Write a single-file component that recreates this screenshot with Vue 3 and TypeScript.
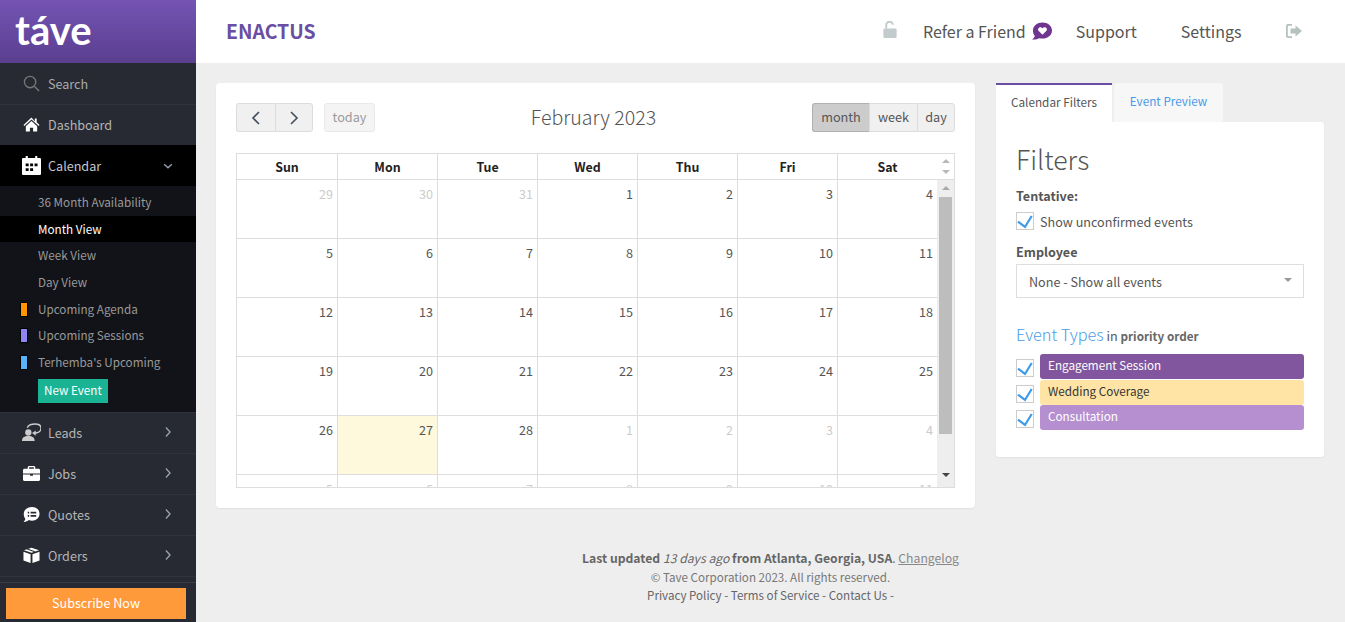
<script setup lang="ts">
const weeks: { n: number; dim?: boolean; today?: boolean }[][] = [
  [{ n: 29, dim: true }, { n: 30, dim: true }, { n: 31, dim: true }, { n: 1 }, { n: 2 }, { n: 3 }, { n: 4 }],
  [{ n: 5 }, { n: 6 }, { n: 7 }, { n: 8 }, { n: 9 }, { n: 10 }, { n: 11 }],
  [{ n: 12 }, { n: 13 }, { n: 14 }, { n: 15 }, { n: 16 }, { n: 17 }, { n: 18 }],
  [{ n: 19 }, { n: 20 }, { n: 21 }, { n: 22 }, { n: 23 }, { n: 24 }, { n: 25 }],
  [{ n: 26 }, { n: 27, today: true }, { n: 28 }, { n: 1, dim: true }, { n: 2, dim: true }, { n: 3, dim: true }, { n: 4, dim: true }],
  [{ n: 5, dim: true }, { n: 6, dim: true }, { n: 7, dim: true }, { n: 8, dim: true }, { n: 9, dim: true }, { n: 10, dim: true }, { n: 11, dim: true }],
]
const days = ['Sun', 'Mon', 'Tue', 'Wed', 'Thu', 'Fri', 'Sat']
const subs = [
  { t: '36 Month Availability' },
  { t: 'Month View', active: true },
  { t: 'Week View' },
  { t: 'Day View' },
  { t: 'Upcoming Agenda', c: '#ff9800' },
  { t: 'Upcoming Sessions', c: '#9184f5' },
  { t: "Terhemba's Upcoming", c: '#55b4fb' },
]
const types = [
  { t: 'Engagement Session', cls: 'ev-a' },
  { t: 'Wedding Coverage', cls: 'ev-b' },
  { t: 'Consultation', cls: 'ev-c' },
]
</script>

<template>
  <div class="app">
    <aside class="side">
      <div class="logo">táve</div>
      <div class="row search">
        <svg class="ic sm" viewBox="0 0 18 18"><circle cx="7.5" cy="7.5" r="6" fill="none" stroke="#777" stroke-width="1.4"/><path d="M12 12l5 5" stroke="#777" stroke-width="1.5"/></svg>
        <span>Search</span>
      </div>
      <div class="row dash">
        <svg class="ic sm" viewBox="0 0 18 18"><path fill="#fff" d="M9 1.500 .5 9.500l.9 1L9 3.600l7.600 6.900.9-1-3-2.800V2.600h-2v3.100zM3 10.800V16.500h4.300v-4h3.400v4H15v-5.700L9 5.200z"/></svg>
        <span>Dashboard</span>
      </div>
      <div class="row open">
        <svg class="ic" viewBox="0 0 18 18"><path fill="#fff" fill-rule="evenodd" d="M3.500 0h2v2h7V0h2v2H17a1 1 0 0 1 1 1v14a1 1 0 0 1-1 1H1a1 1 0 0 1-1-1V3a1 1 0 0 1 1-1h2.500zM3.500 7v2.800h2.800V7zm4.200 0v2.800h2.800V7zm4.200 0v2.800h2.800V7zM3.500 11.500v2.800h2.800v-2.800zm4.200 0v2.800h2.800v-2.800z"/></svg>
        <span class="grow">Calendar</span>
        <svg class="chev" viewBox="0 0 10 10"><path d="M1.800 3.500 5 6.500l3.200-3" fill="none" stroke="#9aa3ae" stroke-width="1.100"/></svg>
      </div>
      <div class="subs">
        <div v-for="s in subs" :key="s.t" class="sub" :class="{ on: s.active }">
          <i v-if="s.c" class="flag" :style="{ background: s.c }"></i>
          {{ s.t }}
        </div>
        <div class="new-ev">New Event</div>
      </div>
      <div class="row item">
        <svg class="ic" viewBox="0 0 18 18"><circle cx="6" cy="9" r="3" fill="#ccc"/><path fill="#ccc" d="M0 17c0-3.500 2-4.800 6-4.800s6 1.300 6 4.800z"/><path d="M5 4.500C6 2 9 1 12.500 1S18 2.500 18 5s-2.500 4.500-6 4.500" fill="none" stroke="#ccc" stroke-width="1.300"/><path fill="#ccc" d="M13 7v5l-3.500-2.500z"/></svg>
        <span class="grow">Leads</span>
        <svg class="chev" viewBox="0 0 10 10"><path d="M3.300 1.200 6.700 5 3.300 8.800" fill="none" stroke="#9aa3ae" stroke-width="1.100"/></svg>
      </div>
      <div class="row item">
        <svg class="ic sm" viewBox="0 0 18 18"><path fill="#fff" d="M6 1h6l1 1v2h4l1 1v4H0V5l1-1h4V2zm.500 1.500V4h5V2.500zM0 10h7.500v1.500h3V10H18v6l-1 1H1l-1-1z"/></svg>
        <span class="grow">Jobs</span>
        <svg class="chev" viewBox="0 0 10 10"><path d="M3.300 1.200 6.700 5 3.300 8.800" fill="none" stroke="#9aa3ae" stroke-width="1.100"/></svg>
      </div>
      <div class="row item">
        <svg class="ic sm" viewBox="0 0 18 18"><path fill="#fff" fill-rule="evenodd" d="M9.500 1C14 1 17.500 4 17.500 8.200S14 15.500 9.500 15.500c-1.200 0-2.300-.2-3.200-.6C4.800 16.200 2.500 17 .5 16.800c1-.8 1.800-2 2-3.300C1.300 12.200.8 10.300.8 8.200.8 4 5 1 9.500 1zM5 6v2h1.500V6zm3 0v2h6V6zM5 9.500v2h1.500v-2zm3 0v2h6v-2z"/></svg>
        <span class="grow">Quotes</span>
        <svg class="chev" viewBox="0 0 10 10"><path d="M3.300 1.200 6.700 5 3.300 8.800" fill="none" stroke="#9aa3ae" stroke-width="1.100"/></svg>
      </div>
      <div class="row item">
        <svg class="ic sm" viewBox="0 0 18 18"><path fill="#fff" d="M9 .8 17 3.500 9 6.200 1 3.500z"/><path fill="#fff" d="M.5 5 8 7.600V17L.5 14.200zM17.500 5 10 7.600V17l7.500-2.800z"/><path d="M4.500 2.200 12.500 5" stroke="#272a33" stroke-width="1.200"/></svg>
        <span class="grow">Orders</span>
        <svg class="chev" viewBox="0 0 10 10"><path d="M3.300 1.200 6.700 5 3.300 8.800" fill="none" stroke="#9aa3ae" stroke-width="1.100"/></svg>
      </div>
      <div class="sep"></div>
      <div class="sub-wrap"><div class="subscribe">Subscribe Now</div></div>
    </aside>

    <div class="main">
      <header class="top">
        <div class="brand">ENACTUS</div>
        <svg class="lock" viewBox="0 0 14 18"><path fill="#c3cccc" d="M1 8h12a1 1 0 0 1 1 1v8a1 1 0 0 1-1 1H1a1 1 0 0 1-1-1V9a1 1 0 0 1 1-1z"/><path d="M3 8V4.500a3.500 3.500 0 0 1 7-.5" fill="none" stroke="#c3cccc" stroke-width="2"/></svg>
        <span class="nav refer">Refer a Friend</span>
        <svg class="heart" viewBox="0 0 21 18"><path fill="#6f3590" d="M11 0c5.500 0 10 3.500 10 8.500S16.500 17 11 17c-1.300 0-2.500-.2-3.500-.5C5.500 17.800 3 18 0 17.800c1.300-.8 2.400-2 3-3.500C1.500 12.800 1 10.800 1 8.500 1 3.500 5.500 0 11 0z"/><path fill="#fff" d="M11 13 6.800 8.800C5 6.500 8.800 3.500 11 6.200c2.200-2.700 6-.300 4.200 2.600z"/></svg>
        <span class="nav support">Support</span>
        <span class="nav settings">Settings</span>
        <svg class="out" viewBox="0 0 16 14"><path fill="#b5c2bf" d="M2 0h4v1.800H2.500a.7.7 0 0 0-.7.7v9c0 .4.300.7.700.7H6V14H2a2 2 0 0 1-2-2V2a2 2 0 0 1 2-2z"/><path fill="#b5c2bf" d="M9.500 1.500 16 7l-6.500 5.500V9.500H4.500v-5h5z"/></svg>
      </header>

      <div class="content">
        <section class="card">
          <div class="toolbar">
            <div class="left">
              <div class="group">
                <button class="btn arrow"><svg viewBox="0 0 10 14"><path d="M8 1 2 7l6 6" fill="none" stroke="#444f5e" stroke-width="1.600"/></svg></button>
                <button class="btn arrow"><svg viewBox="0 0 10 14"><path d="M2 1l6 6-6 6" fill="none" stroke="#444f5e" stroke-width="1.600"/></svg></button>
              </div>
              <button class="btn today">today</button>
            </div>
            <h2 class="title">February 2023</h2>
            <div class="group views">
              <button class="btn vw active">month</button>
              <button class="btn vw">week</button>
              <button class="btn vw">day</button>
            </div>
          </div>

          <div class="cal">
            <div class="head">
              <div v-for="d in days" :key="d" class="hd">{{ d }}</div>
              <div class="head-sb">
                <i class="tri up"></i>
                <i class="tri down"></i>
              </div>
            </div>
            <div class="body">
              <div class="grid">
                <div v-for="(w, i) in weeks" :key="i" class="week">
                  <div v-for="(c, j) in w" :key="j" class="cell" :class="{ dim: c.dim, now: c.today }">{{ c.n }}</div>
                </div>
              </div>
              <div class="sb">
                <i class="tri up dark"></i>
                <div class="thumb"></div>
                <i class="tri down black"></i>
              </div>
            </div>
          </div>
        </section>

        <aside class="filters">
          <div class="tabs">
            <div class="tab on">Calendar Filters</div>
            <div class="tab">Event Preview</div>
          </div>
          <div class="panel">
            <h3 class="ft">Filters</h3>
            <div class="lbl l1">Tentative:</div>
            <div class="chk-row">
              <span class="chk"><svg viewBox="0 0 16 16"><path d="M1 8.700 8 14 14.700 3" fill="none" stroke="#3d9be9" stroke-width="2.200"/></svg></span>
              <span>Show unconfirmed events</span>
            </div>
            <div class="lbl l2">Employee</div>
            <div class="select">
              <span>None - Show all events</span>
              <i class="caret"></i>
            </div>
            <div class="types"><span class="big">Event Types</span> <span class="in">in</span> <b>priority order</b></div>
            <div class="ev-list">
              <div v-for="e in types" :key="e.t" class="ev-row">
                <span class="chk"><svg viewBox="0 0 16 16"><path d="M1 8.700 8 14 14.700 3" fill="none" stroke="#3d9be9" stroke-width="2.200"/></svg></span>
                <div class="ev" :class="e.cls">{{ e.t }}</div>
              </div>
            </div>
          </div>
        </aside>
      </div>

      <footer class="foot">
        <div class="f1"><b>Last updated <em>13 days ago</em> from Atlanta, Georgia, USA</b>. <u>Changelog</u></div>
        <div class="f2">© Tave Corporation 2023. All rights reserved.</div>
        <div class="f3"><span>Privacy Policy</span> - <span>Terms of Service</span> - <span>Contact Us</span> -</div>
      </footer>
    </div>
  </div>
</template>

<style>
html, body { margin: 0; background: #eee; overflow: hidden; }
</style>

<style scoped>
.app {
  display: flex; width: 1345px; height: 622px; overflow: hidden; background: #eeeeee;
  font-family: "Noto Sans CJK SC", "Noto Sans", sans-serif; color: #555;
}
.side { width: 196px; flex: none; background: #272a33; display: flex; flex-direction: column; }
.logo {
  height: 63px; box-sizing: border-box; padding-left: 15px; background: linear-gradient(#7453b4, #5a3f8f);
  color: #fff; font-family: Lato, sans-serif; font-weight: 700; font-size: 40px; line-height: 60px;
}
.row {
  height: 41px; box-sizing: border-box; display: flex; align-items: center; padding: 0 22px 0 22px;
  color: #b5b5b5; font-size: 12.600px; gap: 7px;
}
.row.search { color: #aaa; height: 42px; border-bottom: 1px solid #30333d; }
.row.dash { height: 40px; padding-bottom: 2px; }
.row.open { background: #000; color: #c5c8ce; }
.row.item { border-top: 1px solid #30333d; padding-bottom: 2px; }
.ic { width: 19px; height: 19px; flex: none; }
.ic.sm { width: 17px; height: 17px; margin: 0 1px; }
.grow { flex: 1; }
.chev { width: 12px; height: 12px; flex: none; }
.subs { height: 226px; background: #111318; box-sizing: border-box; padding-top: 3px; }
.sub {
  height: 26.700px; line-height: 26.700px; padding-left: 38px; font-size: 11.700px; color: #9a9a9a; position: relative;
}
.sub.on { background: #000; color: #fff; }
.flag { position: absolute; left: 21px; top: 7px; width: 6px; height: 13px; box-shadow: 0 0 0 1px #000; }
.new-ev {
  margin: 3px 0 0 38px; width: 70px; height: 24px; line-height: 22px; text-align: center; background: #1ab394;
  color: #fff; font-size: 11.700px;
}
.sep { height: 6px; flex: none; border-top: 1px solid #30333d; box-sizing: border-box; }
.sub-wrap { border-top: 1px solid #3a3d45; padding: 5px 10px 0 6px; }
.subscribe {
  height: 31px; line-height: 29px; text-align: center; background: #ff9a3a; color: #fff; font-size: 12.600px;
}
.main { flex: 1; display: flex; flex-direction: column; min-width: 0; }
.top { height: 63px; flex: none; box-sizing: border-box; padding: 0 0 2px 30px; background: #fff; display: flex; align-items: center; font-size: 16px; color: #555; }
.brand { font-weight: 700; font-size: 19.400px; color: #6a4ea3; width: 657px; }
.lock { width: 14px; height: 17px; margin-top: -2px; }
.nav { white-space: nowrap; }
.refer { margin-left: 26px; margin-top: 1px; }
.heart { width: 20px; height: 18px; margin-left: 6px; }
.support { margin-left: 24px; }
.settings { margin-left: 44px; }
.out { width: 16px; height: 14px; margin-left: 45px; }
.content { display: flex; align-items: flex-start; padding: 20px 21px 0 20px; gap: 21px; }
.card {
  width: 759px; height: 425px; box-sizing: border-box; background: #fff; border-radius: 4px; padding: 20px;
  box-shadow: 0 1px 2px rgba(0,0,0,.06);
}
.toolbar { height: 50px; display: flex; align-items: flex-start; justify-content: space-between; }
.left { display: flex; gap: 11px; }
.group { display: flex; }
.btn {
  font-family: inherit; height: 29px; border: 1px solid #dcdcdc; background: #f0f0f0; color: #555; margin: 0; padding: 0 0 2px;
  font-size: 12.700px; box-sizing: border-box; border-radius: 0;
}
.arrow { width: 38.500px; display: flex; align-items: center; justify-content: center; padding: 0; }
.arrow svg { width: 10px; height: 14px; }
.group .btn:first-child { border-radius: 3px 0 0 3px; border-right: 0; }
.group .btn:last-child { border-radius: 0 3px 3px 0; }
.today { width: 51px; background: #f4f4f4; color: #999; border-radius: 3px; border-color: #e8e8e8; }
.title { margin: 0; font-weight: 300; font-size: 19.600px; line-height: 27px; color: #555; }
.views { width: 143px; }
.vw:nth-child(1) { width: 57px; background: #cccccc; border-color: #b0b0b0; }
.vw:nth-child(2) { width: 48px; border-right: 0; }
.vw:nth-child(3) { width: 38px; }
.cal { width: 719px; height: 335px; box-sizing: border-box; border: 1px solid #ddd; overflow: hidden; }
.head { display: flex; height: 26px; box-sizing: border-box; border-bottom: 1px solid #ddd; }
.hd {
  width: 100px; box-sizing: border-box; text-align: center; border-right: 1px solid #ddd; font-size: 12.400px; font-weight: 700;
  color: #222; line-height: 27px;
}
.hd:first-child { width: 101px; }
.hd:nth-child(7) { width: 99px; border-right: 0; }
.head-sb { flex: 1; background: #fff; display: flex; flex-direction: column; align-items: center; justify-content: center; gap: 7px; }
.tri { width: 0; height: 0; display: block; border-left: 4px solid transparent; border-right: 4px solid transparent; }
.up { border-bottom: 4px solid #b8b8b8; }
.down { border-top: 4px solid #b8b8b8; }
.up.dark { border-bottom-color: #aaa; }
.down.black { border-top-color: #444; }
.body { display: flex; height: 308px; overflow: hidden; }
.grid { width: 700px; flex: none; }
.week { display: flex; height: 59px; border-bottom: 1px solid #ddd; box-sizing: border-box; }
.cell {
  width: 100px; box-sizing: border-box; border-right: 1px solid #ddd; padding: 6px 4px 0 0; text-align: right;
  font-size: 12.600px; line-height: 16px; color: #555;
}
.cell:first-child { width: 101px; }
.cell:last-child { width: 99px; border-right: 0; }
.dim { color: #ccc; }
.now { background: #fef8dd; }
.sb { flex: 1; background: #eee; display: flex; flex-direction: column; align-items: center; padding-top: 6px; height: 308px; box-sizing: border-box; }
.thumb { width: 13px; height: 237px; background: #bdbdbd; margin-top: 7px; }
.sb .down { margin-top: 39px; }
.filters { width: 328px; flex: none; }
.tabs { display: flex; height: 39px; gap: 2px; }
.tab {
  width: 109px; box-sizing: border-box; background: #f7f7f7; color: #4a9ae8; font-size: 11.750px; text-align: center; line-height: 36px;
  border-radius: 3px 3px 0 0;
}
.tab.on { width: 116px; background: #fff; color: #555; border-top: 2px solid #6a4ea3; border-radius: 0; line-height: 34px; }
.panel { background: #fff; box-sizing: border-box; height: 335px; padding: 19px 20px 0 20px; border-radius: 0 3px 3px 3px; box-shadow: 0 1px 2px rgba(0,0,0,.06); }
.ft { margin: 0; font-weight: 300; font-size: 26.700px; line-height: 36px; color: #555; }
.lbl { font-weight: 700; font-size: 12.600px; line-height: 18px; color: #555; }
.l1 { margin-top: 10px; }
.chk-row { display: flex; align-items: center; gap: 6px; font-size: 12.600px; margin-top: 7px; height: 18px; }
.chk { width: 18px; height: 18px; box-sizing: border-box; border: 1px solid #ccc; background: #fff; flex: none; display: block; }
.chk svg { width: 16px; height: 16px; display: block; }
.l2 { margin-top: 13px; }
.select {
  margin-top: 3px; height: 34px; box-sizing: border-box; border: 1px solid #ddd; display: flex; align-items: center;
  justify-content: space-between; padding: 0 11px 0 12px; font-size: 12.600px; color: #555;
}
.caret { width: 0; height: 0; border-left: 4px solid transparent; border-right: 4px solid transparent; border-top: 4px solid #999; margin-top: -3px; }
.types { margin-top: 24px; font-size: 12.600px; line-height: 24px; color: #555; }
.big { font-size: 16.300px; font-weight: 300; color: #4a9ae8; }
.types b { font-size: 11.700px; font-weight: 700; color: #666; }
.ev-list { margin-top: 6px; display: flex; flex-direction: column; }
.ev-row { display: flex; gap: 6px; height: 25.500px; }
.ev-row .chk { margin-top: 5px; }
.ev { flex: 1; height: 25px; line-height: 22px; border-radius: 3px; font-size: 11.700px; padding-left: 8px; box-sizing: border-box; }
.ev-a { background: #82569e; color: #fff; }
.ev-b { background: #ffe4a6; color: #333; }
.ev-c { background: #b58fcf; color: #fff; }
.foot { margin-top: 40px; text-align: center; font-size: 11.600px; color: #777; line-height: 18px; }
.f1 { line-height: 20px; font-size: 12.200px; }
.foot b { font-weight: 700; color: #666; }
.foot em { font-weight: 400; }
.foot u { color: #888; }
.f3 { color: #666; }
</style>
